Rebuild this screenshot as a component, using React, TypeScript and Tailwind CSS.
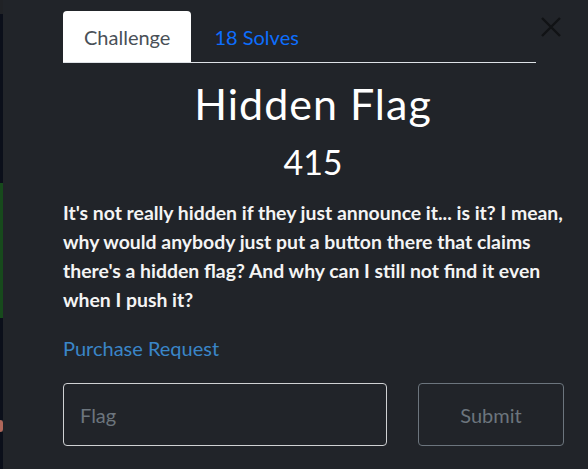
import React from 'react';

const font = { fontFamily: 'Lato, "Noto Sans", sans-serif' };

const EdgeStrip: React.FC = () => (
  <div className="flex w-[3px] shrink-0 flex-col">
    <div className="h-[14px] bg-[#202226]" />
    <div className="h-[169px] bg-[#0b0f1a]" />
    <div className="h-[135px] bg-[#174a1c]" />
    <div className="h-[102px] bg-[#0b0f1a]" />
    <div className="h-[12px] rounded-r-full bg-[#b0675a]" />
    <div className="flex-1 bg-[#0b0f1a]" />
  </div>
);

export default function App() {
  return (
    <div className="flex h-[469px] w-[588px] overflow-hidden bg-[#212429] text-white" style={font}>
      <EdgeStrip />
      <div className="flex w-[560px] flex-col pl-[60px]">
        <div className="flex items-start">
          <nav className="mt-[11px] flex h-[52px] w-[473px] items-end border-b border-[#dee2e6]">
            <button className="h-[51px] rounded-t-[4px] bg-white px-[21px] text-[20px] text-[#495057]">
              Challenge
            </button>
            <button className="h-[51px] px-[23px] text-[20px] text-[#0d6efd]">18 Solves</button>
          </nav>
          <button className="ml-[4px] mt-[17px] text-[#111315]" aria-label="Close">
            <svg width="22" height="20" viewBox="0 0 22 20" fill="none" stroke="currentColor" strokeWidth="2.4">
              <path d="M2 1l18 18M20 1L2 19" />
            </svg>
          </button>
        </div>

        <div className="w-[500px] text-center">
          <h2 className="mt-[15px] text-[43px] leading-[52px] tracking-[1px]">Hidden Flag</h2>
          <h3 className="mt-[12px] text-[34px] leading-[40px]">415</h3>
        </div>

        <p className="mt-[16px] w-[506px] text-[19.4px] font-bold leading-[29px] text-[#f4f4f4]">
          It's not really hidden if they just announce it... is it? I mean, why would anybody just put a
          button there that claims there's a hidden flag? And why can I still not find it even when I push
          it?
        </p>

        <a className="mt-[20px] text-[20px] leading-[29px] text-[#3a86c8]">Purchase Request</a>

        <div className="mt-[20px] flex w-[501px] gap-[31px]">
          <input
            placeholder="Flag"
            className="h-[63px] w-[324px] rounded-[4px] border border-[#cfd1d3] bg-transparent px-[16px] text-[20px] text-white outline-none placeholder:text-[#6c757d]"
          />
          <button className="h-[63px] flex-1 rounded-[4px] border border-[#6c757d] text-[20px] text-[#6c757d]">
            Submit
          </button>
        </div>
      </div>
    </div>
  );
}
